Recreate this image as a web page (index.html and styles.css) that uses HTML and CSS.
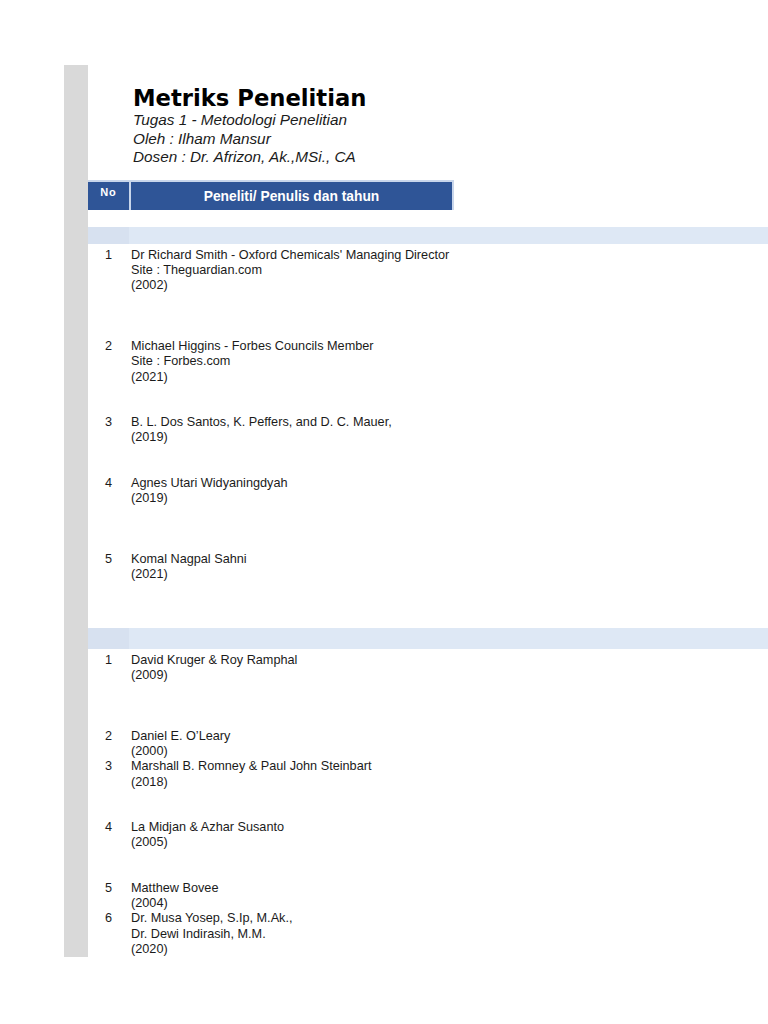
FILE: index.html
```html
<!doctype html>
<html lang="id">
<head>
  <meta charset="utf-8">
  <title>Metriks Penelitian</title>
  <link rel="stylesheet" href="styles.css">
</head>
<body>

<div class="sheet">
  <div class="gutter"></div>

  <main class="content">
    <header class="doc-head">
      <h1>Metriks Penelitian</h1>
      <p class="sub">Tugas 1 - Metodologi Penelitian<br>Oleh : Ilham Mansur<br>Dosen : Dr. Afrizon, Ak.,MSi., CA</p>
    </header>

    <div class="thead">
      <div class="th th-no">No</div>
      <div class="th th-name">Peneliti/ Penulis dan tahun</div>
    </div>

    <div class="band">
      <span class="band-no"></span>
      <span class="band-rest"></span>
    </div>

    <div class="row h6">
      <span class="no">1</span>
      <span class="name">Dr Richard Smith - Oxford Chemicals' Managing Director<br>Site : Theguardian.com<br>(2002)</span>
    </div>
    <div class="row h5">
      <span class="no">2</span>
      <span class="name">Michael Higgins - Forbes Councils Member<br>Site : Forbes.com<br>(2021)</span>
    </div>
    <div class="row h4">
      <span class="no">3</span>
      <span class="name">B. L. Dos Santos, K. Peffers, and D. C. Mauer,<br>(2019)</span>
    </div>
    <div class="row h5">
      <span class="no">4</span>
      <span class="name">Agnes Utari Widyaningdyah<br>(2019)</span>
    </div>
    <div class="row h5">
      <span class="no">5</span>
      <span class="name">Komal Nagpal Sahni<br>(2021)</span>
    </div>

    <div class="band band-tall">
      <span class="band-no"></span>
      <span class="band-rest"></span>
    </div>

    <div class="row h5">
      <span class="no">1</span>
      <span class="name">David Kruger &amp; Roy Ramphal<br>(2009)</span>
    </div>
    <div class="row h2">
      <span class="no">2</span>
      <span class="name">Daniel E. O’Leary<br>(2000)</span>
    </div>
    <div class="row h4">
      <span class="no">3</span>
      <span class="name">Marshall B. Romney &amp; Paul John Steinbart<br>(2018)</span>
    </div>
    <div class="row h4">
      <span class="no">4</span>
      <span class="name">La Midjan &amp; Azhar Susanto<br>(2005)</span>
    </div>
    <div class="row h2">
      <span class="no">5</span>
      <span class="name">Matthew Bovee<br>(2004)</span>
    </div>
    <div class="row h3">
      <span class="no">6</span>
      <span class="name">Dr. Musa Yosep, S.Ip, M.Ak.,<br>Dr. Dewi Indirasih, M.M.<br>(2020)</span>
    </div>
  </main>
</div>

</body>
</html>
```

FILE: styles.css
```css
body {
  margin: 0;
  background: #fff;
  color: #1b1b1b;
  font-family: "Liberation Sans", Arial, sans-serif;
}
.sheet {
  display: flex;
  margin: 65px 0 0 64px;
}
.gutter {
  width: 24px;
  background: #d9d9d9;
  flex-shrink: 0;
}
.content {
  flex: 1;
  display: flex;
  flex-direction: column;
}

/* judul */
.doc-head {
  padding: 21px 0 0 45px;
}
.doc-head h1 {
  margin: 0;
  font-family: "DejaVu Sans", Verdana, sans-serif;
  font-size: 22.7px;
  line-height: 25px;
  font-weight: bold;
  color: #000;
}
.sub {
  margin: 0;
  font-size: 15.3px;
  line-height: 18.5px;
  font-style: italic;
  color: #1b1b1b;
}

/* kepala tabel */
.thead {
  display: flex;
  gap: 2px;
  align-self: flex-start;
  margin-top: 13.5px;
  padding: 2px 2px 0 0;
  background: #c9d6eb;
}
.th {
  height: 28px;
  background: #2f5597;
  color: #fff;
  font-weight: bold;
}
.th-no {
  width: 41px;
  padding-top: 3px;
  box-sizing: border-box;
  text-align: center;
  font-size: 11px;
  line-height: 14px;
  letter-spacing: 1px;
}
.th-name {
  width: 321px;
  display: flex;
  align-items: center;
  justify-content: center;
  font-size: 13.8px;
}

/* baris pemisah biru */
.band {
  display: flex;
  height: 17px;
  margin: 17px 0 4px;
}
.band-tall {
  height: 21px;
  margin-top: 0;
}
.band-no {
  width: 41px;
  background: #d7e1f0;
}
.band-rest {
  flex: 1;
  background: #dee8f5;
}

/* isi */
.row {
  display: flex;
  gap: 2px;
  font-size: 12.7px;
  line-height: 15.2px;
}
.no {
  width: 41px;
  text-align: center;
}
.name {
  flex: 1;
}
.h2 { min-height: 30.4px; }
.h3 { min-height: 45.6px; }
.h4 { min-height: 60.8px; }
.h5 { min-height: 76px; }
.h6 { min-height: 91.2px; }
```
